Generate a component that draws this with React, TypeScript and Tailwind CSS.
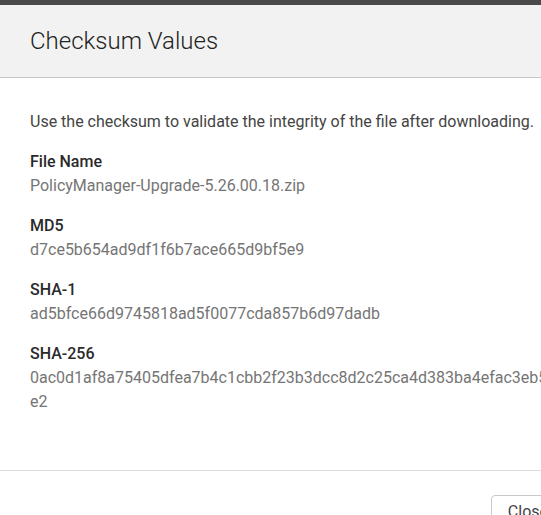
const rows = [
  { label: "File Name", value: "PolicyManager-Upgrade-5.26.00.18.zip" },
  { label: "MD5", value: "d7ce5b654ad9df1f6b7ace665d9bf5e9" },
  { label: "SHA-1", value: "ad5bfce66d9745818ad5f0077cda857b6d97dadb" },
  {
    label: "SHA-256",
    value:
      "0ac0d1af8a75405dfea7b4c1cbb2f23b3dcc8d2c25ca4d383ba4efac3eb5e2",
  },
];

export default function App() {
  return (
    <div
      className="h-[515px] w-[541px] overflow-hidden bg-[#4a4a4a] pt-[5px]"
      style={{ fontFamily: "Roboto, 'Liberation Sans', sans-serif" }}
    >
      <div className="w-[579px] bg-white">
        {/* header */}
        <div className="flex h-[73px] items-center border-b border-[#c8c8c8] bg-[#f2f2f2] px-[30px]">
          <h2 className="text-[24px] font-light text-[#222]">
            Checksum Values
          </h2>
        </div>

        {/* body */}
        <div className="px-[30px] pb-[40px] pt-[32px] text-[16px] leading-6">
          <p className="mb-[16px] text-[#444]">
            Use the checksum to validate the integrity of the file after
            downloading.
          </p>
          {rows.map((row) => (
            <div key={row.label} className="mb-[16px]">
              <div className="font-medium text-[#2a2a2a]">{row.label}</div>
              <div className="break-all text-[#757575]">{row.value}</div>
            </div>
          ))}
        </div>

        {/* footer */}
        <div className="flex justify-end border-t border-[#dcdcdc] pb-[20px] pl-[30px] pr-[14px] pt-[24px]">
          <button className="h-[34px] rounded border border-[#c8c8c8] bg-white px-[16px] text-[16px] text-[#444]">
            Close
          </button>
        </div>
      </div>
    </div>
  );
}
